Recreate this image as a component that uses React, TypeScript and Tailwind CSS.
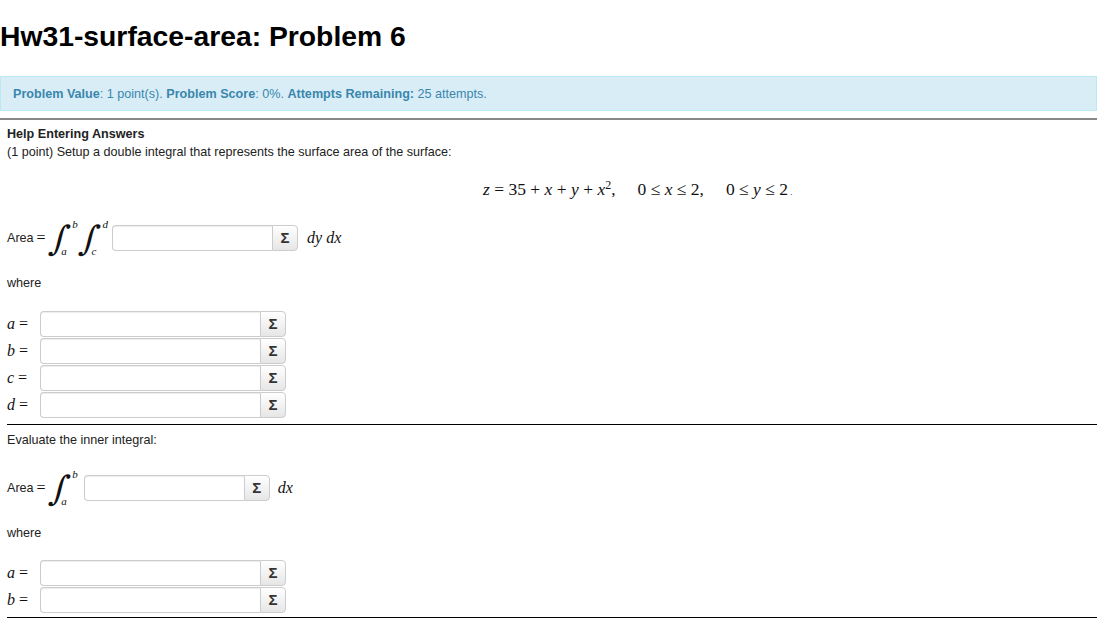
import React from "react";

const MATH = { fontFamily: '"Liberation Serif", "DejaVu Serif", serif' };
const INT = { fontFamily: '"DejaVu Serif", serif' };

function Sigma() {
  return (
    <span className="flex h-full w-[26px] items-center justify-center rounded-r-[4px] border border-[#cccccc] bg-gradient-to-b from-[#ffffff] to-[#e6e6e6] text-[15px] font-bold text-[#333]">
      Σ
    </span>
  );
}

function AnswerBox({ width }: { width: string }) {
  return (
    <div className="flex h-[26px] items-stretch">
      <input
        type="text"
        className={`${width} rounded-l-[4px] border border-r-0 border-[#cccccc] bg-white px-2 text-[12px] shadow-[inset_0_1px_1px_rgba(0,0,0,0.075)] outline-none`}
      />
      <Sigma />
    </div>
  );
}

function Integral({ upper, lower }: { upper: string; lower: string }) {
  return (
    <span className="inline-flex h-[40px] items-center" style={MATH}>
      <span className="-skew-x-[12deg] text-[34px] leading-none text-[#111]" style={INT}>∫</span>
      <span className="flex h-[40px] flex-col justify-between text-[11px] italic leading-none text-[#111]">
        <span className="ml-[4px] mt-[1px]">{upper}</span>
        <span className="-ml-[7px] mb-[1px]">{lower}</span>
      </span>
    </span>
  );
}

function VarRow({ name }: { name: string }) {
  return (
    <div className="flex h-[27px] items-center">
      <span className="w-[33px] text-[16px] text-[#111]" style={MATH}>
        <i>{name}</i> =
      </span>
      <AnswerBox width="w-[220px]" />
    </div>
  );
}

export default function App() {
  return (
    <div className="h-[620px] overflow-hidden bg-white text-[12.6px] leading-[18px] text-[#222]" style={{ fontFamily: '"Liberation Sans", Arial, sans-serif' }}>
      <h1 className="pt-[21px] text-[28.3px] font-bold leading-[30px] text-black">Hw31-surface-area: Problem 6</h1>

      <div className="mt-[25px] flex h-[35px] items-center border border-[#bce8f1] bg-[#d9edf7] px-[12px] text-[#3a87ad]">
        <span>
          <b>Problem Value</b>: 1 point(s). <b>Problem Score</b>: 0%. <b>Attempts Remaining:</b> 25 attempts.
        </span>
      </div>

      <div className="mt-[7px] h-[2px] bg-[#888888]" />

      <div className="pl-[7px]">
        <div className="mt-[5px] font-bold text-[#222]">Help Entering Answers</div>
        <div>(1 point) Setup a double integral that represents the surface area of the surface:</div>

        <div className="mt-[19px] flex h-[20px] items-center pl-[476px] text-[17.5px] text-[#111]" style={MATH}>
          <span className="whitespace-nowrap">
            <i>z</i> = 35 + <i>x</i> + <i>y</i> + <i>x</i>
            <sup className="text-[12px]">2</sup>,
            <span className="inline-block w-[22px]" />0 ≤ <i>x</i> ≤ 2,
            <span className="inline-block w-[22px]" />0 ≤ <i>y</i> ≤ 2<span className="text-[9px]"> .</span>
          </span>
        </div>

        <div className="mt-[18px] flex h-[40px] items-center">
          <span>Area</span>
          <span className="ml-[3px] mr-[5px] text-[16px] text-[#111]" style={MATH}>=</span>
          <Integral upper="b" lower="a" />
          <span className="w-[3px]" />
          <Integral upper="d" lower="c" />
          <span className="ml-[4px]">
            <AnswerBox width="w-[160px]" />
          </span>
          <span className="ml-[9px] text-[16px] italic text-[#111]" style={MATH}>dy dx</span>
        </div>

        <div className="mt-[16px]">where</div>

        <div className="mt-[18px]">
          <VarRow name="a" />
          <VarRow name="b" />
          <VarRow name="c" />
          <VarRow name="d" />
        </div>
      </div>

      <div className="ml-[7px] mt-[6px] h-px bg-black" />

      <div className="pl-[7px]">
        <div className="mt-[6px]">Evaluate the inner integral:</div>

        <div className="mt-[19px] flex h-[40px] items-center">
          <span>Area</span>
          <span className="ml-[3px] mr-[5px] text-[16px] text-[#111]" style={MATH}>=</span>
          <Integral upper="b" lower="a" />
          <span className="ml-[6px]">
            <AnswerBox width="w-[160px]" />
          </span>
          <span className="ml-[8px] text-[16px] italic text-[#111]" style={MATH}>dx</span>
        </div>

        <div className="mt-[16px]">where</div>

        <div className="mt-[17px]">
          <VarRow name="a" />
          <VarRow name="b" />
        </div>
      </div>

      <div className="ml-[7px] mt-[4px] h-px bg-black" />
    </div>
  );
}
